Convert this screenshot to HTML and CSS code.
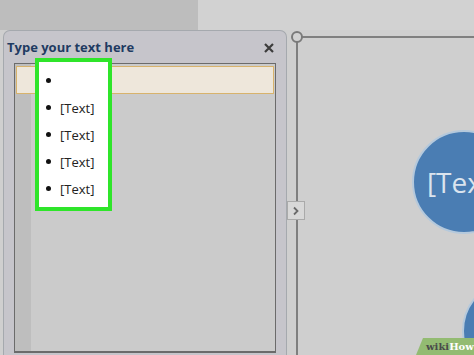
FILE: index.html
```html
<!DOCTYPE html>
<html>
<head>
    <title>SmartArt Text Pane</title>
    <link rel="stylesheet" href="styles.css">
</head>
<body>
    <div class="topbar">
        <div class="slide-strip"></div>
    </div>
    <div class="main">
        <div class="pane">
            <div class="pane-header">
                <h2>Type your text here</h2>
                <svg class="close" width="10" height="10" viewBox="0 0 10 10"><path d="M1 1 L9 9 M9 1 L1 9" stroke="#3c3c3c" stroke-width="2.2"/></svg>
            </div>
            <div class="textbox">
                <div class="row selected"><span class="item"></span></div>
                <div class="row"><span class="item">[Text]</span></div>
                <div class="row"><span class="item">[Text]</span></div>
                <div class="row"><span class="item">[Text]</span></div>
                <div class="row"><span class="item">[Text]</span></div>
            </div>
            <div class="highlight"></div>
        </div>
        <div class="canvas">
            <div class="frame">
                <span class="handle"></span>
                <span class="toggle">
                    <svg width="8" height="10" viewBox="0 0 8 10"><path d="M2 1.5 L5.5 5 L2 8.5" fill="none" stroke="#6a6a6a" stroke-width="1.8"/></svg>
                </span>
                <div class="node node-one">[Text]</div>
                <div class="node node-two">[Text]</div>
            </div>
        </div>
    </div>
    <div class="watermark"><span class="wiki">wiki</span><span class="how">How</span></div>
</body>
</html>
```

FILE: styles.css
```css
body {
    margin: 0;
    width: 474px;
    height: 355px;
    overflow: hidden;
    position: relative;
    background-color: #cfcfcf;
    font-family: "Open Sans", "DejaVu Sans", sans-serif;
}
.topbar {
    height: 30px;
    display: flex;
    background-color: #d2d2d2;
}
.slide-strip {
    width: 198px;
    background-color: #bdbdbd;
}
.main {
    display: flex;
    height: 325px;
}
.pane {
    position: relative;
    margin-left: 3px;
    width: 282px;
    height: 330px;
    background-color: #c6c5cb;
    border: 1px solid #a5a9ae;
    border-bottom: none;
    border-radius: 7px 7px 0 0;
}
.pane-header {
    height: 32px;
    display: flex;
    align-items: center;
    justify-content: space-between;
    padding: 0 12px 0 3px;
}
.pane-header h2 {
    margin: 0;
    font-size: 13px;
    font-weight: 700;
    color: #1f3b62;
}
.close {
    margin-top: 1px;
}
.textbox {
    margin-left: 10px;
    width: 262px;
    height: 290px;
    padding: 2px 1px 0;
    box-sizing: border-box;
    border: 1px solid #6b6b6b;
    border-bottom-width: 2px;
    background: linear-gradient(to right, #bebebe 16px, #cbcbcb 16px);
}
.row {
    height: 27px;
    display: flex;
    align-items: center;
    padding-left: 30px;
    font-size: 13px;
    color: #222;
}
.row.selected {
    height: 28px;
    box-sizing: border-box;
    padding-left: 29px;
    border: 1px solid #d8b36c;
    background-color: #eee7db;
}
.item {
    position: relative;
    z-index: 2;
    display: flex;
    align-items: center;
}
.item::before {
    content: "";
    width: 5px;
    height: 5px;
    margin-right: 9px;
    border-radius: 50%;
    background-color: #111;
}
.highlight {
    position: absolute;
    z-index: 1;
    left: 31px;
    top: 27px;
    width: 77px;
    height: 153px;
    box-sizing: border-box;
    border: 4px solid #2fe52a;
    background-color: #fff;
}
.canvas {
    flex: 1;
    padding: 6px 0 0 9px;
}
.frame {
    position: relative;
    height: 100%;
    border-top: 2px solid #7f7f7f;
    border-left: 2px solid #7f7f7f;
}
.handle {
    position: absolute;
    left: -7px;
    top: -7px;
    width: 8px;
    height: 8px;
    border: 2px solid #7a7a7a;
    border-radius: 50%;
    background-color: #d2d2d2;
}
.toggle {
    position: absolute;
    left: -11px;
    top: 163px;
    width: 18px;
    height: 19px;
    box-sizing: border-box;
    border: 1px solid #aaa;
    background-color: #d8d8d8;
    display: flex;
    align-items: center;
    justify-content: center;
}
.node {
    position: absolute;
    width: 104px;
    height: 104px;
    box-sizing: border-box;
    border: 2px solid #b5c9dc;
    border-radius: 50%;
    background-color: #4a7db3;
    color: #dbe4ee;
    font-size: 28px;
    display: flex;
    align-items: center;
    justify-content: center;
}
.node-one {
    left: 114px;
    top: 92px;
}
.node-two {
    left: 164px;
    top: 241px;
}
.watermark {
    position: absolute;
    right: 0;
    bottom: 0;
    width: 48px;
    height: 17px;
    padding-left: 10px;
    background-color: #93bb72;
    clip-path: polygon(7px 0, 100% 0, 100% 100%, 0 100%);
    font-family: "DejaVu Serif", serif;
    font-size: 10px;
    font-weight: 700;
    line-height: 18px;
}
.wiki {
    color: #4a4a4a;
}
.how {
    color: #fff;
}
```
